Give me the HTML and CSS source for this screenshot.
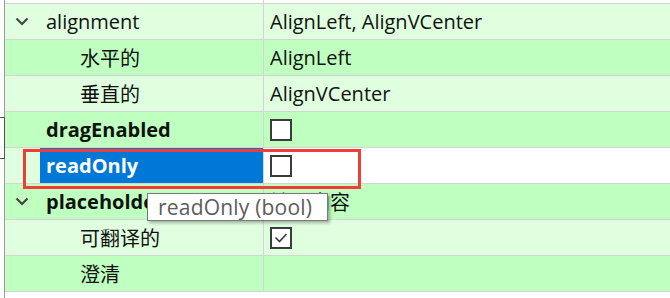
FILE: index.html
```html
<!DOCTYPE html>
<html lang="zh">
<head>
  <meta charset="UTF-8">
  <title>属性编辑器</title>
  <link rel="stylesheet" href="styles.css">
</head>
<body>
<div class="editor">
  <div class="row stub">
    <div class="name"></div>
    <div class="value"></div>
  </div>

  <div class="row light">
    <div class="name">
      <svg class="chevron" width="14" height="9" viewBox="0 0 14 9"><path d="M1.5 1.5 L7 7 L12.5 1.5" fill="none" stroke="#454545" stroke-width="2.2"/></svg>
      <span>alignment</span>
    </div>
    <div class="value">AlignLeft, AlignVCenter</div>
  </div>
  <div class="row dark">
    <div class="name sub">水平的</div>
    <div class="value">AlignLeft</div>
  </div>
  <div class="row light">
    <div class="name sub">垂直的</div>
    <div class="value">AlignVCenter</div>
  </div>
  <div class="row dark">
    <div class="name top bold">dragEnabled</div>
    <div class="value"><span class="check"></span></div>
  </div>
  <div class="row light">
    <div class="name"><span class="selected bold">readOnly</span></div>
    <div class="value editing"><span class="check"></span></div>
  </div>
  <div class="row dark">
    <div class="name">
      <svg class="chevron" width="14" height="9" viewBox="0 0 14 9"><path d="M1.5 1.5 L7 7 L12.5 1.5" fill="none" stroke="#454545" stroke-width="2.2"/></svg>
      <span class="bold">placeholderText</span>
    </div>
    <div class="value">输入内容</div>
  </div>
  <div class="row light">
    <div class="name sub">可翻译的</div>
    <div class="value">
      <span class="check">
        <svg width="18" height="18" viewBox="0 0 18 18"><path d="M3.5 8.5 L7.5 12.5 L14.5 5" fill="none" stroke="#3a3a3a" stroke-width="1.6"/></svg>
      </span>
    </div>
  </div>
  <div class="row dark">
    <div class="name sub">澄清</div>
    <div class="value"></div>
  </div>

  <!-- рамка выделения и всплывающая подсказка поверх таблицы -->
  <div class="highlight"></div>
  <div class="tooltip">readOnly (bool)</div>
  <div class="edge-mark"></div>
</div>
</body>
</html>
```

FILE: styles.css
```css
body {
  margin: 0;
  background: #ffffff;
  font-family: "Open Sans", "Noto Sans CJK SC", sans-serif;
  font-size: 20px;
  color: #111111;
}

.editor {
  position: relative;
  height: 298px;
  margin-left: 4px;
  border-left: 1px solid #9a9a9a;
}

.row {
  display: flex;
  height: 35px;
  border-bottom: 1px solid #d4d4d4;
}

.row.stub {
  height: 3px;
  background: #ffffff;
}

.light {
  background: #dfffdf;
}

.dark {
  background: #bfffbf;
}

.name {
  width: 258px;
  flex-shrink: 0;
  border-right: 1px solid #d4d4d4;
  display: flex;
  align-items: center;
  padding-left: 41px;
  box-sizing: content-box;
  width: 217px;
  white-space: nowrap;
  overflow: hidden;
}

.name .chevron {
  margin-left: -31px;
  margin-right: 17px;
  flex-shrink: 0;
}

.name.sub {
  padding-left: 75px;
  width: 183px;
}

.bold {
  font-weight: 700;
}

.selected {
  align-self: stretch;
  display: flex;
  align-items: center;
  margin-left: -6px;
  padding-left: 6px;
  flex: 1;
  background: #0078d7;
  color: #ffffff;
}

.value {
  flex: 1;
  display: flex;
  align-items: center;
  padding-left: 6px;
  white-space: nowrap;
}

.value.editing {
  background: #ffffff;
}

.check {
  display: inline-flex;
  align-items: center;
  justify-content: center;
  width: 18px;
  height: 18px;
  border: 2px solid #3c3c3c;
  background: #ffffff;
}

.highlight {
  position: absolute;
  left: 18px;
  top: 149px;
  width: 332px;
  height: 34px;
  border: 3px solid #f23b3b;
}

.tooltip {
  position: absolute;
  left: 142px;
  top: 193px;
  width: 169px;
  height: 26px;
  padding-left: 10px;
  background: #ffffff;
  border: 1px solid #7a7a7a;
  box-shadow: 2px 2px 3px rgba(0, 0, 0, 0.3);
  color: #5c5c5c;
  font-size: 21px;
  line-height: 26px;
  letter-spacing: 0.2px;
}

.edge-mark {
  position: absolute;
  left: -5px;
  top: 117px;
  width: 4px;
  height: 40px;
  border: 1px solid #555555;
  border-left: none;
}
```
